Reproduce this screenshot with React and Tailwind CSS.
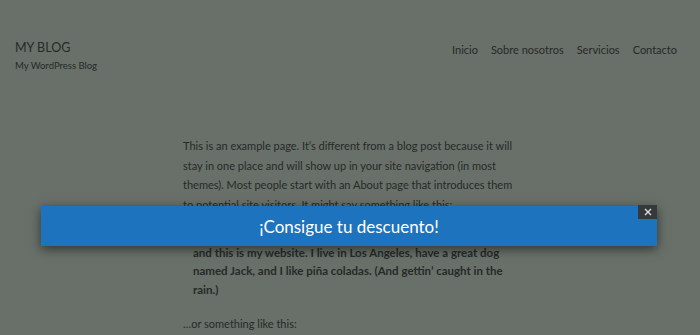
import React from 'react';

const navItems = ['Inicio', 'Sobre nosotros', 'Servicios', 'Contacto'];

const App = () => {
    return (
        <div className="relative w-[700px] h-[335px] overflow-hidden bg-[#687069] text-[#262a28] font-['Lato',sans-serif]">
            {/* Header */}
            <header className="flex justify-between items-start pl-[15px] pr-[23px] pt-[40px]">
                <div>
                    <h1 className="text-[12.5px] leading-[16px]">MY BLOG</h1>
                    <p className="text-[9.5px] leading-[13px] mt-[3px]">My WordPress Blog</p>
                </div>
                <nav className="flex gap-[13px] text-[11px] leading-[16px] pt-[2px]">
                    {navItems.map((item) => (
                        <a key={item} href="#">{item}</a>
                    ))}
                </nav>
            </header>

            {/* Page content */}
            <main className="w-[336px] ml-[183px] mt-[64px] text-[11px] leading-[19.5px]">
                <p>
                    This is an example page. It’s different from a blog post because it will stay in one place and will show up in your site navigation (in most themes). Most people start with an About page that introduces them to potential site visitors. It might say something like this:
                </p>
                <blockquote className="pl-[10px] mt-[11px] font-bold text-[11.5px] leading-[18.5px]">
                    <p>
                        Hi there! I’m a bike messenger by day, aspiring actor by night, and this is my website. I live in Los Angeles, have a great dog named Jack, and I like piña coladas. (And gettin’ caught in the rain.)
                    </p>
                </blockquote>
                <p className="mt-[15px]">…or something like this:</p>
            </main>

            {/* Discount banner */}
            <div className="absolute left-[41px] top-[206px] w-[616px] h-[40px] pt-[1px] bg-[#1e73be] shadow-[0_3px_10px_rgba(0,0,0,0.55)] flex items-center justify-center">
                <span className="text-white text-[17px]">¡Consigue tu descuento!</span>
                <button className="absolute right-0 top-[-1px] w-[19px] h-[14px] bg-[#35393b] flex items-center justify-center">
                    <svg width="8" height="8" viewBox="0 0 8 8" stroke="#e5e5e5" strokeWidth="1.2">
                        <path d="M1 1 L7 7 M7 1 L1 7" />
                    </svg>
                </button>
            </div>
        </div>
    );
};

export default App;
